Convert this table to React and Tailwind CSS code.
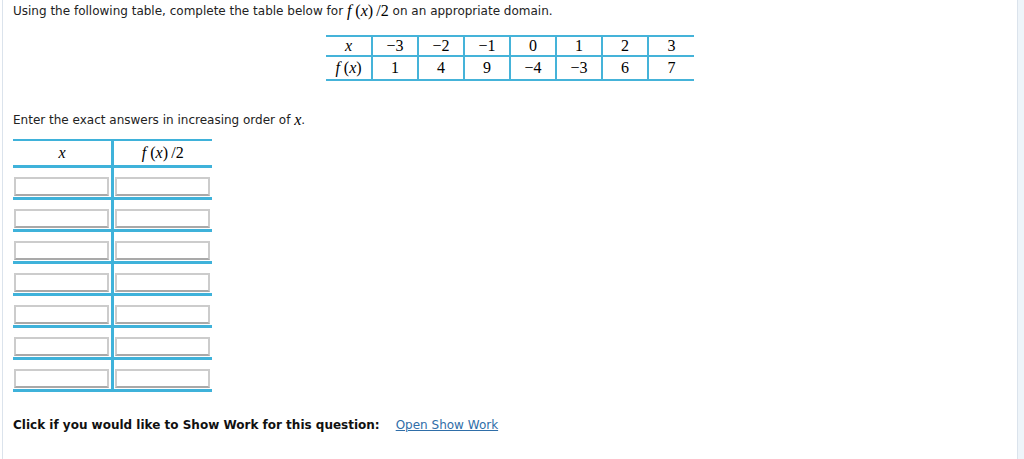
import React from "react";

const xs = ["\u22123", "\u22122", "\u22121", "0", "1", "2", "3"];
const fs = ["1", "4", "9", "\u22124", "\u22123", "6", "7"];

export default function App() {
  return (
    <div className="w-[1024px] h-[459px] bg-white flex font-['DejaVu_Sans',Verdana,sans-serif] text-[12px] text-[#222]">
      <div className="ml-[2px] w-[1016px] h-full border-l border-r border-[#dbe3ec] bg-white pl-[10px] pt-[3px]">
        <div className="h-[16px] flex items-center">
          <span>Using the following table, complete the table below for&nbsp;</span>
          <span className="font-['Liberation_Serif',serif] text-[16px] text-black">
            <i>f</i>&nbsp;(<i>x</i>)&thinsp;/2
          </span>
          <span>&nbsp;on an appropriate domain.</span>
        </div>

        <div className="mt-[16px] ml-[313px]">
          <table className="border-collapse font-['Liberation_Serif',serif] text-[16px] leading-none text-black">
            <tbody>
              <tr className="h-[20px] border-t-2 border-b-2 border-[#45b3d9]">
                <td className="w-[46px] text-center p-0 border-r-2 border-[#45b3d9] italic">x</td>
                {xs.map((v, i) => (
                  <td key={i} className={"w-[46px] text-center p-0 " + (i < 6 ? "border-r-2 border-[#45b3d9]" : "")}>{v}</td>
                ))}
              </tr>
              <tr className="h-[24px] border-b-2 border-[#45b3d9]">
                <td className="w-[46px] text-center p-0 border-r-2 border-[#45b3d9]"><i>f</i>&nbsp;(<i>x</i>)</td>
                {fs.map((v, i) => (
                  <td key={i} className={"w-[46px] text-center p-0 " + (i < 6 ? "border-r-2 border-[#45b3d9]" : "")}>{v}</td>
                ))}
              </tr>
            </tbody>
          </table>
        </div>

        <div className="mt-[31px] h-[16px] flex items-center">
          <span>Enter the exact answers in increasing order of&nbsp;</span>
          <i className="font-['Liberation_Serif',serif] text-[16px] text-black">x</i>
          <span>.</span>
        </div>

        <table className="mt-[11px] border-collapse font-['Liberation_Serif',serif] text-[16px] leading-none text-black">
          <tbody>
            <tr className="h-[26px] border-t-2 border-b-[3px] border-[#3fb2da]">
              <td className="w-[99px] p-0 text-center border-r-[3px] border-[#3fb2da] italic">x</td>
              <td className="w-[99px] p-0 text-center"><i>f</i>&nbsp;(<i>x</i>)&thinsp;/2</td>
            </tr>
            {Array.from({ length: 7 }).map((_, r) => (
              <tr key={r} className="h-[32px] border-b-[3px] border-[#3fb2da]">
                <td className="p-0 align-bottom border-r-[3px] border-[#3fb2da]">
                  <div className="pl-[1px] pr-[2px] pb-[1px]">
                    <input className="block w-[95px] h-[19px] border-2 border-[#cccccc] border-b-[#a9a9a9] bg-white outline-none" />
                  </div>
                </td>
                <td className="p-0 align-bottom">
                  <div className="pl-[1px] pr-[1px] pb-[1px]">
                    <input className="block w-[95px] h-[19px] border-2 border-[#cccccc] border-b-[#a9a9a9] bg-white outline-none" />
                  </div>
                </td>
              </tr>
            ))}
          </tbody>
        </table>

        <div className="mt-[25px] flex items-center h-[16px]">
          <span className="font-bold text-[#111]">Click if you would like to Show Work for this question:</span>
          <a className="ml-[16px] underline text-[#2f6ea8]" href="#">Open Show Work</a>
        </div>
      </div>
      <div className="flex-1 h-full bg-[#eef4f9]"></div>
    </div>
  );
}
